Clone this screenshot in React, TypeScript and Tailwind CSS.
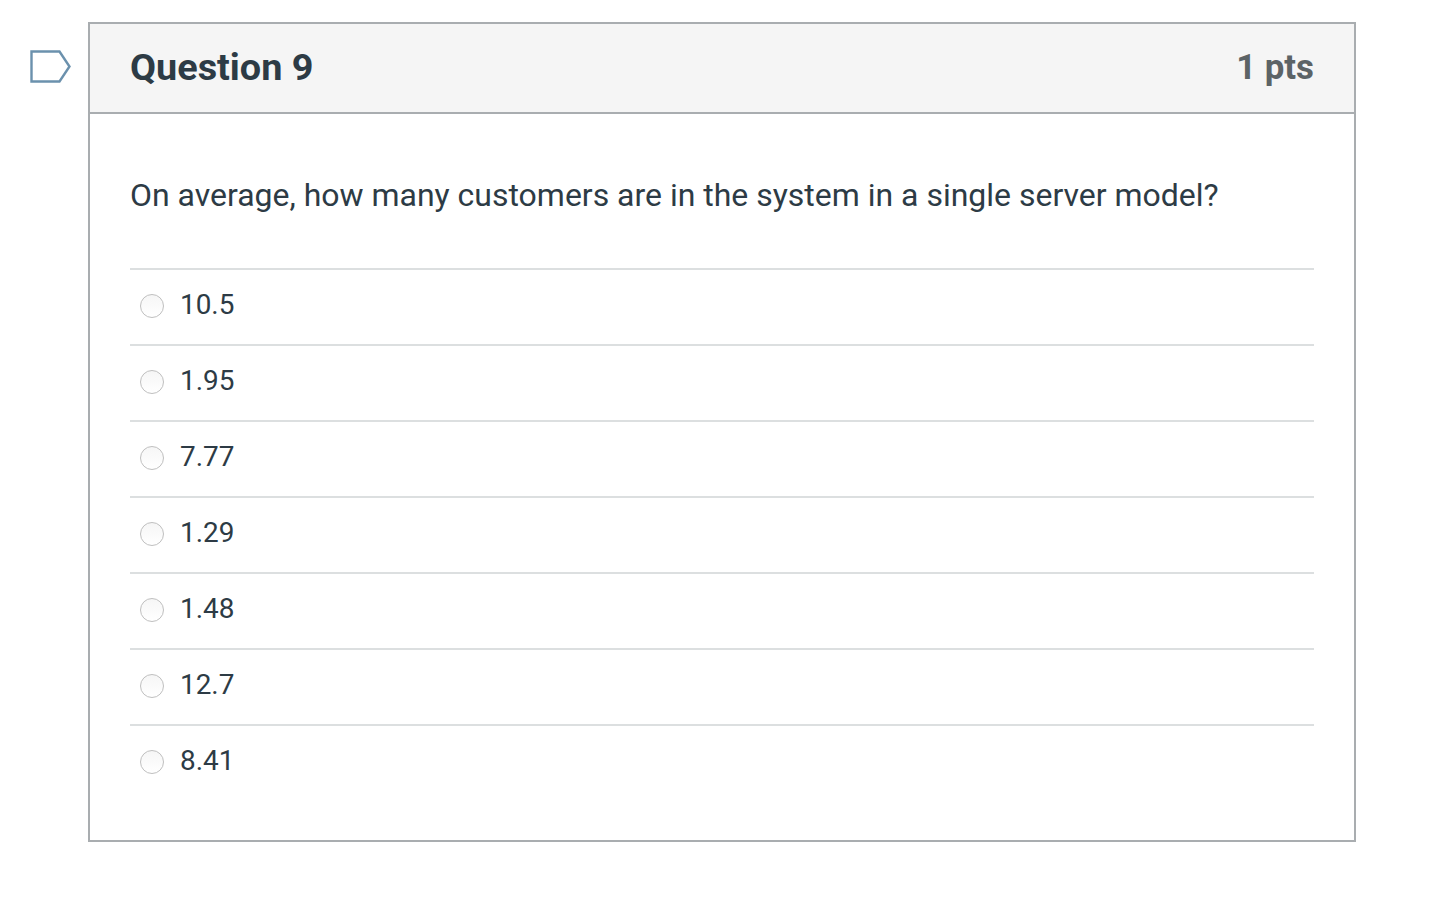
const answers = ["10.5", "1.95", "7.77", "1.29", "1.48", "12.7", "8.41"]

const Flag = () => (
  <svg width="42" height="34" viewBox="0 0 42 34" fill="none" className="absolute left-[-60px] top-[26px]">
    <path d="M1.5 1.5H29.5L39.5 16.5L29.5 31.5H1.5Z" fill="#fff" stroke="#6b91ad" strokeWidth="2.4" />
  </svg>
)

const Radio = () => (
  <span className="w-6 h-6 mb-[2px] rounded-full border border-[#bfbfbf] bg-gradient-to-b from-[#f6f6f6] to-white shrink-0"></span>
)

export default function App() {
  return (
    <div className="min-h-[920px] bg-white pt-[22px] pl-[88px] font-['Roboto',sans-serif] text-[#2d3b45]">
      <div className="relative w-[1268px] h-[820px] border-2 border-[#a9adb0]">
        <Flag />
        <div className="flex items-center justify-between h-[90px] px-[40px] pb-[2px] bg-[#f5f5f5] border-b-2 border-[#a9adb0]">
          <h2 className="text-[37.8px] font-bold">Question 9</h2>
          <div className="text-[34.8px] font-bold text-[#5c6366]">1 pts</div>
        </div>
        <div className="px-[40px] pt-[59px]">
          <p className="text-[31.97px] leading-[44px] mb-[51px]">
            On average, how many customers are in the system in a single server model?
          </p>
          {answers.map((a) => (
            <div key={a} className="flex items-center h-[76px] pl-[10px] gap-[16px] border-t-2 border-[#dcdfe0] text-[27.9px]">
              <Radio />
              <span className="pb-[4px]">{a}</span>
            </div>
          ))}
        </div>
      </div>
    </div>
  )
}
